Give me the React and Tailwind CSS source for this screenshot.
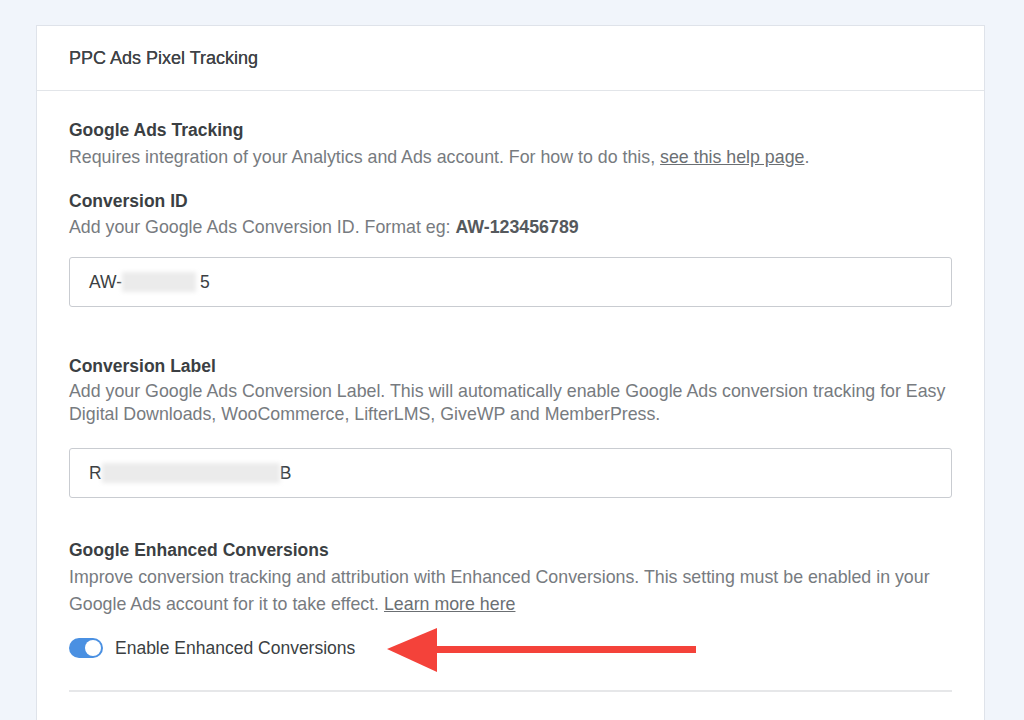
import React from 'react';

const font = { fontFamily: '"Liberation Sans", Arial, sans-serif' };

function Blur({ w }) {
  return <span className="inline-block h-[20px] bg-[#ebebeb] blur-[2px] align-middle" style={{ width: w }} />;
}

export default function App() {
  return (
    <div className="min-h-[720px] bg-[#f1f5fb] pt-[25px] pl-[36px] overflow-hidden" style={font}>
      <div className="relative w-[949px] bg-white border border-[#dfe3ea] h-[720px]">
        {/* Header */}
        <div className="h-[65px] flex items-center px-[32px] border-b border-[#e2e5e9]">
          <h2 className="text-[18px] text-[#3f4347] [text-shadow:0_0_0.4px_#3f4347]">PPC Ads Pixel Tracking</h2>
        </div>

        <div className="px-[32px] pt-[26px]">
          {/* Google Ads Tracking */}
          <h3 className="text-[17.5px] leading-[27px] font-bold text-[#3b3f43]">Google Ads Tracking</h3>
          <p className="text-[17.8px] leading-[27px] text-[#777b80]">
            Requires integration of your Analytics and Ads account. For how to do this,{' '}
            <a className="underline text-[#6b6f73]">see this help page</a>.
          </p>

          {/* Conversion ID */}
          <h3 className="mt-[17px] text-[17.5px] leading-[27px] font-bold text-[#3b3f43]">Conversion ID</h3>
          <p className="text-[17.8px] leading-[24px] text-[#777b80]">
            Add your Google Ads Conversion ID. Format eg: <b className="text-[#55595d]">AW-123456789</b>
          </p>
          <div className="mt-[18px] h-[50px] border border-[#c9ccd1] rounded-[3px] flex items-center pl-[19px] text-[17.5px] text-[#3b3f43]">
            <span>AW-</span>
            <Blur w={74} />
            <span className="ml-[4px]">5</span>
          </div>

          {/* Conversion Label */}
          <h3 className="mt-[46px] text-[17.5px] leading-[27px] font-bold text-[#3b3f43]">Conversion Label</h3>
          <p className="text-[17.8px] leading-[23px] text-[#777b80]">
            Add your Google Ads Conversion Label. This will automatically enable Google Ads conversion tracking for Easy
            Digital Downloads, WooCommerce, LifterLMS, GiveWP and MemberPress.
          </p>
          <div className="mt-[22px] h-[50px] border border-[#c9ccd1] rounded-[3px] flex items-center pl-[19px] text-[17.5px] text-[#3b3f43]">
            <span>R</span>
            <Blur w={178} />
            <span>B</span>
          </div>

          {/* Enhanced Conversions */}
          <h3 className="mt-[39px] text-[17.5px] leading-[27px] font-bold text-[#3b3f43]">Google Enhanced Conversions</h3>
          <p className="text-[17.8px] leading-[27px] text-[#777b80]">
            Improve conversion tracking and attribution with Enhanced Conversions. This setting must be enabled in your
            Google Ads account for it to take effect. <a className="underline text-[#6b6f73]">Learn more here</a>
          </p>
          <div className="mt-[17px] flex items-center gap-[12px]">
            <span className="w-[34px] h-[20px] rounded-full bg-[#4a90e2] flex items-center justify-end pr-[2px]">
              <span className="w-[16px] h-[16px] rounded-full bg-white" />
            </span>
            <span className="text-[17.5px] text-[#3b3f43]">Enable Enhanced Conversions</span>
          </div>
          <div className="mt-[29px] border-t-2 border-[#e6e7e9]" />
        </div>

        {/* annotation arrow */}
        <svg className="absolute left-[349px] top-[601px]" width="312" height="46" viewBox="0 0 312 46">
          <polygon points="1,22 51,1 51,45" fill="#f4423a" />
          <rect x="48" y="19" width="262" height="7" fill="#f4423a" />
        </svg>
      </div>
    </div>
  );
}
